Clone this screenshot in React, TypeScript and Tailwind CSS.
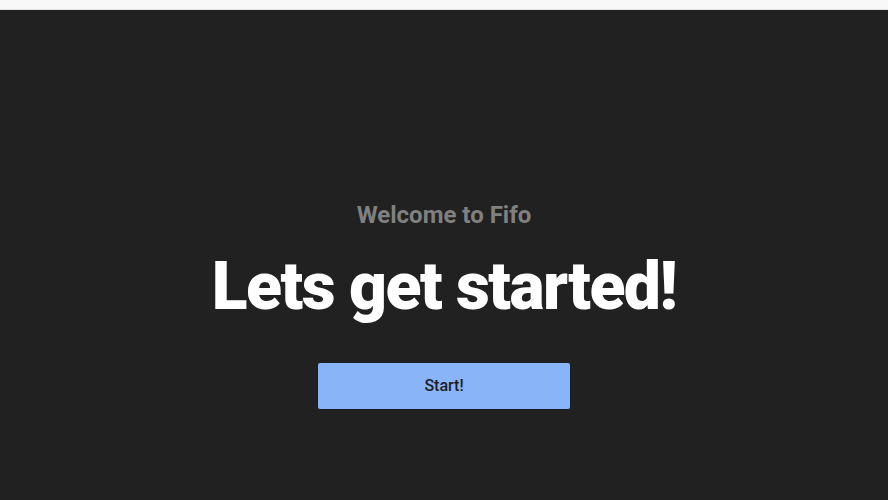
export default function App() {
  return (
    <div className="flex h-[500px] w-full flex-col bg-[#212121]" style={{ fontFamily: "Roboto, 'Liberation Sans', sans-serif" }}>
      <div className="h-[10px] w-full shrink-0 border-b border-[#e6e6e6] bg-[#f8f8f8]" />
      <div className="flex flex-1 flex-col items-center">
        <div className="mt-[190px] text-[24px] font-bold leading-[30px] text-[#808080]">Welcome to Fifo</div>
        <h1 className="mt-[19px] text-[66px] font-black leading-[76px] tracking-[-1.5px] text-white">Lets get started!</h1>
        <button
          type="button"
          className="mt-[37px] h-[48px] w-[254px] rounded-[3px] border border-[#1a1d24] bg-[#8ab4f8] text-[16px] font-medium text-[#1b1f2a]"
        >
          Start!
        </button>
      </div>
    </div>
  );
}
